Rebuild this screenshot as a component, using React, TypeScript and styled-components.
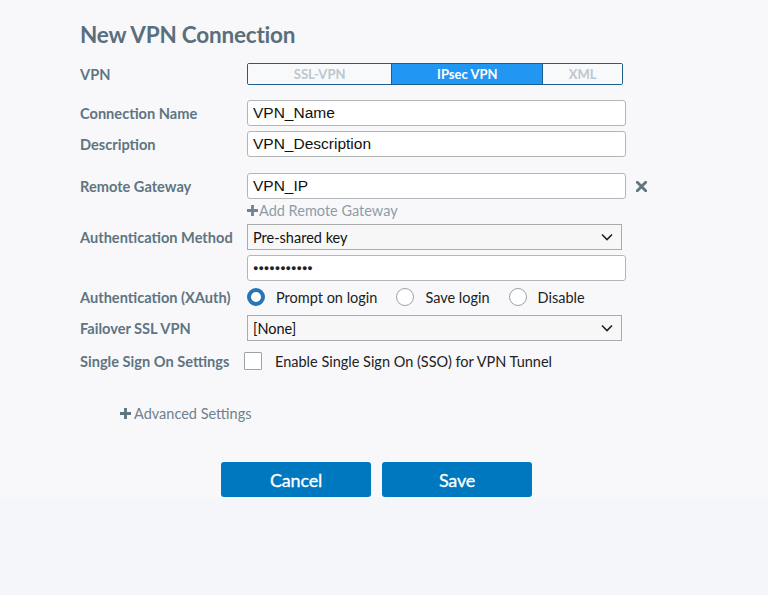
import React from "react";
import styled, { createGlobalStyle } from "styled-components";

const Global = createGlobalStyle`
  html, body { margin: 0; padding: 0; background: #f5f6fa; }
  body { font-family: Lato, "Open Sans", sans-serif; }
  * { box-sizing: border-box; }
`;

const Page = styled.div`
  width: 768px;
  min-height: 595px;
  background: #f5f6fa;
`;

const Panel = styled.div`
  background: #f8f8fa;
  padding: 20px 0 0 80px;
  height: 498px;
`;

const Title = styled.h1`
  margin: 0;
  font-size: 22.5px;
  font-weight: 700;
  color: #5a6f7c;
  line-height: 30px;
  letter-spacing: -0.2px;
`;

const Row = styled.div<{ $mt: number; $h: number }>`
  display: grid;
  grid-template-columns: 167px auto;
  align-items: center;
  margin-top: ${(p) => p.$mt}px;
  height: ${(p) => p.$h}px;
`;

const Label = styled.div`
  font-size: 14.6px;
  font-weight: 700;
  color: #5f7582;
  white-space: nowrap;
`;

const Toggle = styled.div`
  display: flex;
  width: 376px;
  height: 22px;
  border: 1.5px solid #1d5e8c;
  border-radius: 2px;
  overflow: hidden;
`;

const Seg = styled.div<{ $w: number; $active?: boolean }>`
  width: ${(p) => p.$w}px;
  display: flex;
  align-items: center;
  justify-content: center;
  font-size: 13px;
  font-weight: 700;
  color: ${(p) => (p.$active ? "#ffffff" : "#bcc7cf")};
  background: ${(p) => (p.$active ? "#2196f3" : "#f8f9fb")};
  & + & { border-left: 1.5px solid #1d5e8c; }
`;

const Input = styled.div<{ $w?: number }>`
  width: ${(p) => p.$w ?? 379}px;
  height: 26px;
  background: #fff;
  border: 1px solid #b3b6b9;
  border-radius: 3px;
  padding: 0 5px;
  display: flex;
  align-items: center;
  font-family: "Liberation Sans", Arial, sans-serif;
  font-size: 15.5px;
  color: #111;
`;

const Dots = styled.span`
  font-family: "Liberation Sans", Arial, sans-serif;
  font-size: 9px;
  color: #222;
  font-weight: 700;
`;

const Select = styled.div`
  width: 375px;
  height: 26px;
  background: #f7f7f7;
  border: 1px solid #a9abad;
  padding: 0 8px 0 5px;
  display: flex;
  align-items: center;
  justify-content: space-between;
  font-size: 14.5px;
  color: #111;
`;

const Control = styled.div`
  display: flex;
  align-items: center;
`;

const RemoveBtn = styled.span`
  margin-left: 10px;
  display: inline-flex;
`;

const AddLink = styled.div`
  margin: 2px 0 0 167px;
  display: flex;
  align-items: center;
  gap: 1px;
  font-size: 14.5px;
  color: #8d9da7;
  height: 18px;
`;

const RadioGroup = styled.div`
  display: flex;
  align-items: center;
`;

const RadioItem = styled.label`
  display: flex;
  align-items: center;
  font-size: 14.5px;
  color: #222;
  margin-right: 19px;
  gap: 11px;
`;

const RadioCircle = styled.span<{ $on?: boolean }>`
  width: 18px;
  height: 18px;
  border-radius: 50%;
  background: #fff;
  border: ${(p) => (p.$on ? "4.5px solid #2874b6" : "1px solid #9aa3aa")};
  display: inline-block;
`;

const CheckRow = styled.label`
  display: flex;
  align-items: center;
  gap: 13px;
  margin-left: -3px;
  font-size: 14.5px;
  color: #222;
`;

const CheckBox = styled.span`
  width: 18px;
  height: 18px;
  background: #fff;
  border: 1px solid #9aa3aa;
  border-radius: 1px;
  display: inline-block;
`;

const Advanced = styled.div`
  margin: 32px 0 0 40px;
  display: flex;
  align-items: center;
  gap: 3px;
  font-size: 14.5px;
  color: #6d818e;
`;

const Buttons = styled.div`
  display: flex;
  gap: 11px;
  margin: 40px 0 0 141px;
`;

const Button = styled.button`
  width: 150px;
  height: 35px;
  border: none;
  border-radius: 3px;
  background: #0078bf;
  color: #fff;
  font-family: Lato, sans-serif;
  font-size: 18px;
  font-weight: 400;
  letter-spacing: -0.2px;
  -webkit-text-stroke: 0.3px #fff;
`;

const Plus = ({ color, size = 11 }: { color: string; size?: number }) => (
  <svg width={size} height={size} viewBox="0 0 10 10">
    <path d="M3.7 0h2.6v3.7H10v2.6H6.3V10H3.7V6.3H0V3.7h3.7z" fill={color} />
  </svg>
);

const Chevron = () => (
  <svg width="12" height="8" viewBox="0 0 12 8">
    <path d="M1 1.5l5 5 5-5" stroke="#222" strokeWidth="1.6" fill="none" />
  </svg>
);

const XIcon = () => (
  <svg width="11" height="11" viewBox="0 0 10 10">
    <path d="M1.2 1.2l7.6 7.6M8.8 1.2l-7.6 7.6" stroke="#5f7582" strokeWidth="2.6" strokeLinecap="round" />
  </svg>
);

export default function App() {
  return (
    <Page>
      <Global />
      <Panel>
        <Title>New VPN Connection</Title>
        <Row $mt={12} $h={24}>
          <Label>VPN</Label>
          <Toggle>
            <Seg $w={144}>SSL-VPN</Seg>
            <Seg $w={152} $active>IPsec VPN</Seg>
            <Seg $w={80}>XML</Seg>
          </Toggle>
        </Row>
        <Row $mt={14} $h={26}>
          <Label>Connection Name</Label>
          <Input>VPN_Name</Input>
        </Row>
        <Row $mt={5} $h={26}>
          <Label>Description</Label>
          <Input>VPN_Description</Input>
        </Row>
        <Row $mt={16} $h={26}>
          <Label>Remote Gateway</Label>
          <Control>
            <Input>VPN_IP</Input>
            <RemoveBtn>
              <XIcon />
            </RemoveBtn>
          </Control>
        </Row>
        <AddLink>
          <Plus color="#6f8592" />
          Add Remote Gateway
        </AddLink>
        <Row $mt={5} $h={26}>
          <Label>Authentication Method</Label>
          <Select>
            Pre-shared key
            <Chevron />
          </Select>
        </Row>
        <Row $mt={5} $h={26}>
          <span />
          <Input>
            <Dots>●●●●●●●●●●●</Dots>
          </Input>
        </Row>
        <Row $mt={3} $h={26}>
          <Label>Authentication (XAuth)</Label>
          <RadioGroup>
            <RadioItem>
              <RadioCircle $on />
              Prompt on login
            </RadioItem>
            <RadioItem>
              <RadioCircle />
              Save login
            </RadioItem>
            <RadioItem>
              <RadioCircle />
              Disable
            </RadioItem>
          </RadioGroup>
        </Row>
        <Row $mt={5} $h={26}>
          <Label>Failover SSL VPN</Label>
          <Select>
            [None]
            <Chevron />
          </Select>
        </Row>
        <Row $mt={8} $h={24}>
          <Label>Single Sign On Settings</Label>
          <CheckRow>
            <CheckBox />
            Enable Single Sign On (SSO) for VPN Tunnel
          </CheckRow>
        </Row>
        <Advanced>
          <Plus color="#5f7582" size={11} />
          Advanced Settings
        </Advanced>
        <Buttons>
          <Button>Cancel</Button>
          <Button>Save</Button>
        </Buttons>
      </Panel>
    </Page>
  );
}
